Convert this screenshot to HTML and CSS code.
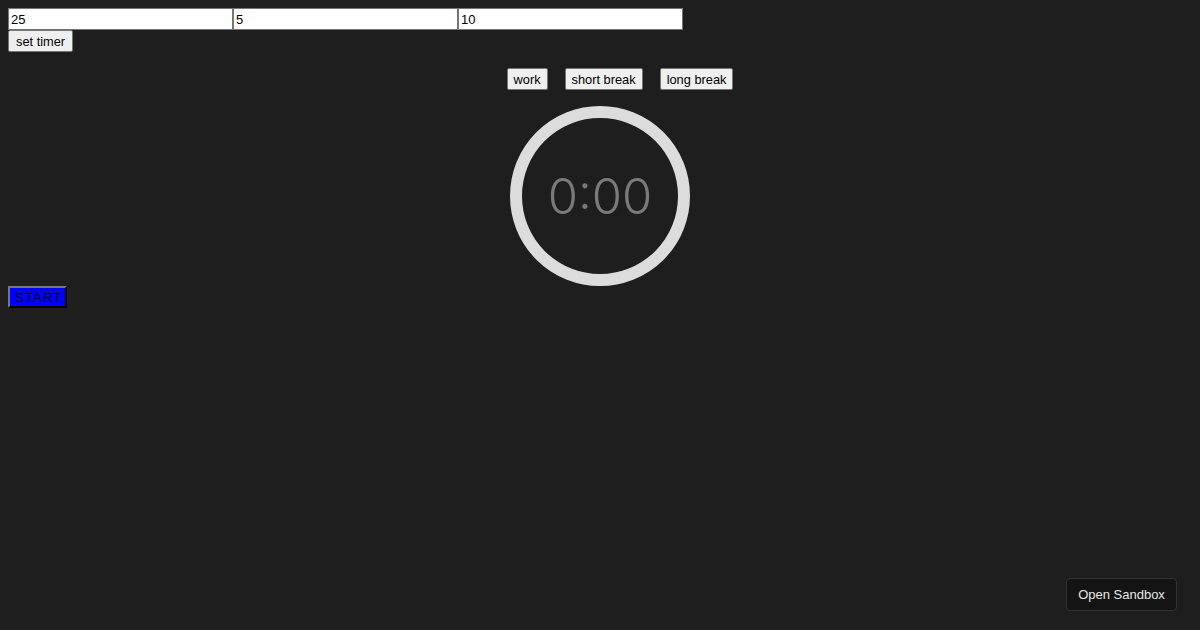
FILE: index.html
```html
<!DOCTYPE html>
<html>
<head>
<meta charset="utf-8">
<link rel="stylesheet" href="styles.css">
</head>
<body>
<div class="settings">
  <div class="inputs">
    <input class="field" type="text" value="25">
    <input class="field" type="text" value="5">
    <input class="field" type="text" value="10">
  </div>
  <button class="btn">set timer</button>
</div>
<div class="modes">
  <button class="btn mode">work</button>
  <button class="btn mode">short break</button>
  <button class="btn mode">long break</button>
</div>
<div class="clock-wrap">
  <div class="clock"><span class="time">0:00</span></div>
</div>
<button class="start">START</button>
<button class="sandbox">Open Sandbox</button>
</body>
</html>
```
FILE: styles.css
```css
html, body {
  margin: 0;
  padding: 0;
  background: #1e1e1e;
  height: 100%;
}
body {
  padding: 8px;
  box-sizing: border-box;
  font-family: "Liberation Sans", Arial, sans-serif;
}
.inputs {
  display: flex;
}
.field {
  width: 225px;
  height: 22px;
  box-sizing: border-box;
  margin: 0;
  border: 1px solid #767676;
  padding: 1px 2px;
  font-family: "Liberation Sans", Arial, sans-serif;
  font-size: 13px;
  color: #000;
  background: #fff;
}
.btn {
  display: block;
  height: 22px;
  box-sizing: border-box;
  margin: 0;
  padding: 1px 7px;
  border: 1px solid #767676;
  border-radius: 2px;
  background: #efefef;
  color: #000;
  font-family: "Liberation Sans", Arial, sans-serif;
  font-size: 12.8px;
}
.mode {
  padding: 1px 6px;
}
.modes {
  display: flex;
  justify-content: center;
  gap: 17px;
  padding-left: 40px;
  margin-top: 16px;
}
.clock-wrap {
  display: flex;
  justify-content: center;
  margin-top: 16px;
}
.clock {
  width: 180px;
  height: 180px;
  box-sizing: border-box;
  border: 12px solid #dcdcdc;
  border-radius: 50%;
  display: flex;
  align-items: center;
  justify-content: center;
}
.time {
  font-family: Inter, sans-serif;
  font-weight: 300;
  font-size: 49px;
  color: #7a7a7a;
  line-height: 1;
}
.start {
  display: block;
  width: 59px;
  height: 22px;
  box-sizing: border-box;
  margin: 0;
  padding: 0 0 0 2px;
  background: #0000ff;
  border: 2px outset #777;
  border-right-color: #111;
  border-bottom-color: #111;
  color: #000;
  font-family: "Liberation Sans", Arial, sans-serif;
  font-size: 13.5px;
  letter-spacing: 0.8px;
  text-align: center;
}
.sandbox {
  position: fixed;
  right: 23px;
  bottom: 19px;
  width: 111px;
  height: 33px;
  box-sizing: border-box;
  background: #141414;
  border: 1px solid #333;
  border-radius: 4px;
  color: #e6e6e6;
  font-family: "Liberation Sans", Arial, sans-serif;
  font-size: 13px;
  padding: 0;
}
```
